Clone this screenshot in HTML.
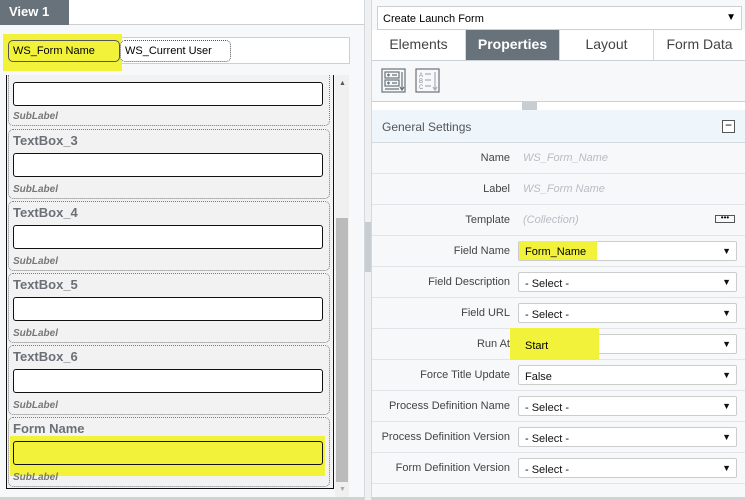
<!DOCTYPE html>
<html><head><style>
*{margin:0;padding:0;box-sizing:border-box}
body{width:745px;height:500px;overflow:hidden;background:#f7f8fa;font-family:"Liberation Sans",Arial,sans-serif;position:relative}
.a{position:absolute}
.sec{position:absolute;left:8px;width:322px;height:70px;border:1px dotted #777;border-radius:5px;background:#f2f2f2}
.sec .t{position:absolute;left:4px;top:3px;font-size:13px;font-weight:bold;color:#6b7078}
.sec .in{position:absolute;left:4px;top:23px;width:310px;height:24px;background:#fff;border:1px solid #111;border-radius:3px}
.sec .s{position:absolute;left:4px;top:54px;font-size:10px;font-style:italic;font-weight:bold;color:#777}
.row{position:absolute;left:372px;width:373px;height:31px;border-bottom:1px solid #e2e4e7}
.row .l{position:absolute;right:235px;top:9px;font-size:11px;color:#444;white-space:nowrap}
.row .v{position:absolute;left:151px;top:9px;font-size:11px;font-style:italic;color:#b8bcc2}
.sel{position:absolute;left:146px;top:5px;width:219px;height:20px;background:#fff;border:1px solid #ccc;border-radius:2px;font-size:11px;color:#111;padding:5px 0 0 6px}
.sel:after{content:"▼";position:absolute;right:5px;top:4px;font-size:9px}
.tab{position:absolute;top:30px;height:30px;font-size:14px;color:#444;text-align:center;line-height:29px;border-right:1px solid #d6d9dc;background:#fff}
</style></head><body>
<div class="a" style="left:0;top:0;width:364px;height:25px;background:#fff;border-bottom:1px solid #ccd0d5"></div>
<div class="a" style="left:0;top:0;width:69px;height:25px;background:#67727a;color:#fff;font-weight:bold;font-size:13px;padding:4px 0 0 9px">View 1</div>
<div class="a" style="left:3px;top:37px;width:347px;height:27px;background:#fff;border:1px solid #ccd0d5"></div>
<div class="a" style="left:3px;top:34px;width:119px;height:37px;background:#f2f23a"></div>
<div class="a" style="left:8px;top:40px;width:112px;height:22px;border:1px solid #555;border-radius:5px;font-size:11px;padding:4px 0 0 4px">WS_Form Name</div>
<div class="a" style="left:120px;top:40px;width:111px;height:22px;border:1px dotted #555;border-radius:5px;font-size:11px;padding:4px 0 0 4px;background:#fff">WS_Current User</div>
<div class="a" style="left:6px;top:75px;width:328px;height:414px;border-left:1px solid #111;border-right:1px solid #111;border-bottom:1px solid #111;background:#f2f2f2"></div>
<div class="sec" style="top:75px;height:51px;border-top:none;border-radius:0 0 5px 5px"><div class="in" style="top:7px"></div><div class="s" style="top:36px">SubLabel</div></div>
<div class="sec" style="top:129px"><div class="t">TextBox_3</div><div class="in"></div><div class="s">SubLabel</div></div>
<div class="sec" style="top:201px"><div class="t">TextBox_4</div><div class="in"></div><div class="s">SubLabel</div></div>
<div class="sec" style="top:273px"><div class="t">TextBox_5</div><div class="in"></div><div class="s">SubLabel</div></div>
<div class="sec" style="top:345px"><div class="t">TextBox_6</div><div class="in"></div><div class="s">SubLabel</div></div>
<div class="sec" style="top:417px"><div class="t">Form Name</div><div class="a" style="left:1px;top:18px;width:315px;height:40px;background:#f2f23a"></div><div class="in" style="background:#f2f23a"></div><div class="s">SubLabel</div></div>
<div class="a" style="left:335px;top:75px;width:14px;height:422px;background:#f0f0f0"></div>
<div class="a" style="left:339px;top:80px;font-size:7px;color:#555">▲</div>
<div class="a" style="left:339px;top:486px;font-size:7px;color:#aaa">▼</div>
<div class="a" style="left:336px;top:218px;width:12px;height:264px;background:#bbb"></div>
<div class="a" style="left:0;top:497px;width:364px;height:3px;background:#d0d3d6"></div>
<div class="a" style="left:364px;top:0;width:8px;height:500px;background:#eef0f2;border-left:1px solid #d6d9dc;border-right:1px solid #d6d9dc"></div>
<div class="a" style="left:365px;top:222px;width:6px;height:50px;background:#c8cdd2"></div>
<div class="a" style="left:372px;top:0;width:373px;height:500px;background:#f7f8fa"></div>
<div class="a" style="left:377px;top:6px;width:365px;height:24px;background:#fff;border:1px solid #ccd0d5;font-size:11px;padding:6px 0 0 5px">Create Launch Form<span style="position:absolute;right:5px;top:5px;font-size:10px">▼</span></div>
<div class="tab" style="left:372px;width:94px">Elements</div>
<div class="tab" style="left:466px;width:94px;background:#67727a;color:#fff;font-weight:bold">Properties</div>
<div class="tab" style="left:560px;width:94px">Layout</div>
<div class="tab" style="left:654px;width:91px;border-right:none">Form Data</div>
<div class="a" style="left:372px;top:60px;width:373px;height:1px;background:#ccd0d5"></div>
<svg class="a" style="left:381px;top:68px" width="60" height="26" viewBox="0 0 60 26" fill="none" stroke="#67727a" stroke-width="1.2">
<rect x="1" y="1" width="23" height="23"/><rect x="4" y="4" width="14" height="6"/><rect x="4" y="12" width="14" height="6"/><path d="M6 7h3M7.5 5.5v3M11 7h5M6 15h3M7.5 13.5v3M11 15h5M4 21h14M21 4v17M19 19l2 3 2-3"/>
<rect x="35" y="1" width="23" height="23"/><text x="38" y="9" font-size="6" fill="#889" stroke="none" font-family="Liberation Sans">A</text><text x="38" y="15" font-size="6" fill="#889" stroke="none" font-family="Liberation Sans">B</text><text x="38" y="21" font-size="6" fill="#889" stroke="none" font-family="Liberation Sans">C</text><path d="M44 6h6M44 12h6M44 18h6M54 4v17M52 19l2 3 2-3" stroke="#aab"/>
</svg>
<div class="a" style="left:372px;top:101px;width:373px;height:9px;background:#fff;border-top:1px solid #ccd0d5"></div>
<div class="a" style="left:522px;top:102px;width:15px;height:8px;background:#c8cdd2"></div>
<div class="a" style="left:372px;top:110px;width:373px;height:33px;background:#eef5fb;border-bottom:1px solid #d6d9dc;font-size:12px;color:#555;padding:10px 0 0 10px">General Settings</div>
<div class="a" style="left:722px;top:120px;width:13px;height:13px;border:1px solid #555;background:#fff;font-size:12px;line-height:9px;text-align:center">−</div>
<div class="row" style="top:143px"><span class="l">Name</span><span class="v">WS_Form_Name</span></div>
<div class="row" style="top:174px"><span class="l">Label</span><span class="v">WS_Form Name</span></div>
<div class="row" style="top:205px"><span class="l">Template</span><span class="v">(Collection)</span><span class="a" style="left:343px;top:10px;width:20px;height:8px;border:1px solid #555;font-size:8px;line-height:4px;text-align:center">•••</span></div>
<div class="row" style="top:236px"><span class="l">Field Name</span><div class="sel">Form_Name</div><div class="a" style="left:147px;top:5px;width:78px;height:19px;background:#f2f23a;font-size:11px;padding:5px 0 0 6px">Form_Name</div></div>
<div class="row" style="top:267px"><span class="l">Field Description</span><div class="sel">- Select -</div></div>
<div class="row" style="top:298px"><span class="l">Field URL</span><div class="sel">- Select -</div></div>
<div class="row" style="top:329px"><span class="l">Run At</span><div class="sel">Start</div><div class="a" style="left:138px;top:-1px;width:89px;height:32px;background:#f2f23a"></div><span class="a" style="left:153px;top:11px;font-size:11px">Start</span></div>
<div class="row" style="top:360px"><span class="l">Force Title Update</span><div class="sel">False</div></div>
<div class="row" style="top:391px"><span class="l">Process Definition Name</span><div class="sel">- Select -</div></div>
<div class="row" style="top:422px"><span class="l">Process Definition Version</span><div class="sel">- Select -</div></div>
<div class="row" style="top:453px"><span class="l">Form Definition Version</span><div class="sel">- Select -</div></div>
<div class="a" style="left:372px;top:497px;width:373px;height:3px;background:#d0d3d6"></div>
</body></html>
